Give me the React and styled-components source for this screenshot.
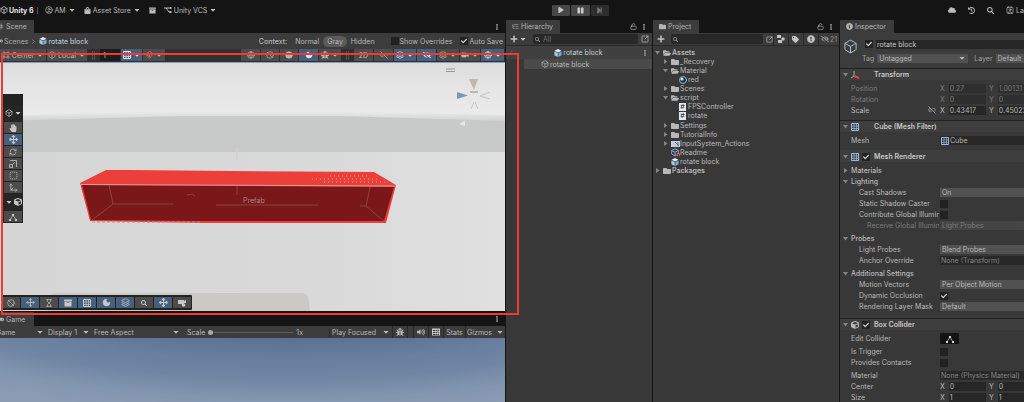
import React from 'react'
import styled, { createGlobalStyle, css } from 'styled-components'
import {
  FaArchive,
  FaArrowsAlt,
  FaBug,
  FaCaretDown,
  FaCheck,
  FaCloud,
  FaCube,
  FaEllipsisV,
  FaExclamationCircle,
  FaEyeSlash,
  FaFolder,
  FaFolderOpen,
  FaGamepad,
  FaHandPaper,
  FaHashtag,
  FaHistory,
  FaInfoCircle,
  FaPause,
  FaPlay,
  FaPlus,
  FaSearch,
  FaShoppingBag,
  FaStepForward,
  FaTag,
  FaVolumeUp,
} from 'react-icons/fa'
import {
  Ban,
  Box,
  ChevronRight,
  ChevronLeft,
  Circle,
  CircleUser,
  Contact,
  Frame,
  Globe,
  Hash,
  Hourglass,
  Layers,
  Link2Off,
  ListTree,
  Magnet,
  Moon,
  Move,
  Move3d,
  RefreshCw,
  SquareArrowOutUpRight,
  SquareDashed,
  Unlock,
  Video,
} from 'lucide-react'

export default () => {
  return (
    <Editor>
      <GlobalStyle />
      <TopBar />
      <Workspace>
        <SceneColumn />
        <HierarchyPanel />
        <ProjectPanel />
        <InspectorPanel />
      </Workspace>
    </Editor>
  )
}

/* ---------- top bar ---------- */

const TopBar = () => (
  <Header>
    <HeaderSide>
      <HeaderItem $bold>
        <Box size={8} />
        Unity 6
      </HeaderItem>
      <HeaderRule />
      <HeaderItem>
        <CircleUser size={8} />
        AM
        <Caret />
      </HeaderItem>
      <HeaderItem>
        <FaShoppingBag size={7} />
        Asset Store
        <Caret />
      </HeaderItem>
      <HeaderItem aria-label="Package Manager">
        <FaArchive size={7} />
      </HeaderItem>
      <HeaderItem>
        <VcsIcon />
        Unity VCS
        <Caret />
      </HeaderItem>
    </HeaderSide>
    <PlayControls>
      <PlayButton aria-label="Play">
        <FaPlay size={6} />
      </PlayButton>
      <PlayButton aria-label="Pause">
        <FaPause size={7} />
      </PlayButton>
      <PlayButton aria-label="Step" $dim>
        <FaStepForward size={7} />
      </PlayButton>
    </PlayControls>
    <HeaderSide $end>
      <HeaderItem aria-label="Cloud">
        <FaCloud size={8} />
      </HeaderItem>
      <HeaderItem aria-label="Undo history">
        <FaHistory size={7} />
      </HeaderItem>
      <HeaderItem aria-label="Search">
        <FaSearch size={7} />
      </HeaderItem>
      <HeaderItem>
        <Contact size={8} />
        La
      </HeaderItem>
    </HeaderSide>
  </Header>
)

const Caret = () => <FaCaretDown size={8} />

const VcsIcon = () => (
  <svg width="8" height="8" viewBox="0 0 8 8" fill="none" stroke="currentColor">
    <path d="M0 2h2l3 4h1M2 2h3" />
    <path d="M5.5 1h2v2h-2zM5.5 5h2v2h-2z" fill="currentColor" stroke="none" />
  </svg>
)

const ColliderIcon = ({ size = 8 }) => (
  <svg width={size} height={size} viewBox="0 0 8 8" fill="currentColor">
    <path d="M1 7L4 2l3 5" fill="none" stroke="currentColor" strokeWidth="0.7" />
    <path d="M3 1h2v2H3zM0 6h2v2H0zM6 6h2v2H6z" />
  </svg>
)

const GridIcon = ({ color = 'currentColor' }) => (
  <svg width="8" height="8" viewBox="0 0 8 8" fill="none" stroke={color}>
    <path d="M0.500 0.500h7v7h-7z" />
    <path d="M0 3h8M0 5.500h8M3 0v8M5.500 0v8" strokeWidth="0.700" />
  </svg>
)

const ScaleIcon = () => (
  <svg width="9" height="9" viewBox="0 0 9 9" fill="none" stroke="currentColor">
    <path d="M0.500 5.500h3v3h-3zM1 1.500h6.500V8M3.500 5.500L6 3" strokeWidth="0.800" />
  </svg>
)

const KeyboardIcon = () => (
  <svg width="8" height="8" viewBox="0 0 8 8">
    <path d="M0 0.500h8v7H0z" fill="#c4c4c4" />
    <path d="M1 2.500h6M1 4.500h6M1 6.500h6" stroke="#3c3c3c" strokeDasharray="2 0.500" />
  </svg>
)

const CameraIcon = () => (
  <svg width="8" height="8" viewBox="0 0 8 8" fill="currentColor">
    <path d="M0 1h6v4H0zM6 2l2-1v3L6 4z" />
    <circle cx="5.500" cy="6" r="1.800" />
  </svg>
)

/* ---------- scene + game ---------- */

const SceneColumn = () => (
  <Column>
    <TabRow>
      <Tab>
        <Hash size={7} />
        Scene
      </Tab>
      <Menu />
    </TabRow>
    <Breadcrumbs>
      <Crumb href="#scenes">
        <FaGamepad size={6} />
        Scenes
      </Crumb>
      <ChevronRight size={7} />
      <Crumb href="#rotate-block" $current>
        <PrefabIcon />
        rotate block
      </Crumb>
      <Context>
        <ContextLabel>Context:</ContextLabel>
        <ContextButton>Normal</ContextButton>
        <ContextButton $active>Gray</ContextButton>
        <ContextButton>Hidden</ContextButton>
      </Context>
      <ToggleLabel>
        <Check />
        Show Overrides
      </ToggleLabel>
      <ToggleLabel>
        <Check checked />
        Auto Save
      </ToggleLabel>
    </Breadcrumbs>
    <SceneTools>
      <ToolButton $w={46}>
        <Frame size={8} />
        Center
        <Caret />
      </ToolButton>
      <ToolButton $w={40}>
        <Box size={8} />
        Local
        <Caret />
      </ToolButton>
      <Grip />
      <SnapInput aria-label="Snap increment" defaultValue="1" />
      <ToolButton $w={21} $active aria-label="Grid snapping">
        <GridIcon />
        <Caret />
      </ToolButton>
      <ToolButton $w={22} aria-label="Increment snapping">
        <Magnet size={8} color="#e08078" />
        <Caret />
      </ToolButton>
      <Spacer />
      <ToolButton $w={19} aria-label="Wireframe">
        <Globe size={8} />
      </ToolButton>
      <ToolButton $w={18} aria-label="Shaded wireframe">
        <Ban size={8} />
      </ToolButton>
      <ToolButton $w={18} aria-label="Shaded">
        <Circle size={8} fill="currentColor" />
      </ToolButton>
      <ToolButton $w={19} $active aria-label="Lit">
        <Moon size={8} fill="currentColor" />
      </ToolButton>
      <ToolButton $w={22} aria-label="Debug draw">
        <FaBug size={8} />
        <Caret />
      </ToolButton>
      <Grip />
      <ToolButton $w={19} aria-label="2D view">
        2D
      </ToolButton>
      <ToolButton $w={19} aria-label="Lighting">
        <Link2Off size={8} />
      </ToolButton>
      <ToolButton $w={22} $active aria-label="Effects">
        <Layers size={8} />
        <Caret />
      </ToolButton>
      <ToolButton $w={19} $active aria-label="Visibility">
        <FaEyeSlash size={8} />
      </ToolButton>
      <ToolButton $w={22} aria-label="Scene layers">
        <Layers size={8} />
        <Caret />
      </ToolButton>
      <ToolButton $w={20} aria-label="Camera">
        <Video size={8} fill="currentColor" />
        <Caret />
      </ToolButton>
      <ToolButton $w={23} $active aria-label="Gizmos">
        <Globe size={8} />
        <Caret />
      </ToolButton>
    </SceneTools>
    <SceneView>
      <SceneDrawing />
      <ToolPalette>
        <PaletteGrip />
        <PaletteButton $dark aria-label="Tool settings">
          <Box size={8} />
          <Caret />
        </PaletteButton>
        <PaletteButton aria-label="Hand">
          <FaHandPaper size={8} />
        </PaletteButton>
        <PaletteButton $active aria-label="Move">
          <FaArrowsAlt size={9} />
        </PaletteButton>
        <PaletteButton aria-label="Rotate">
          <RefreshCw size={8} />
        </PaletteButton>
        <PaletteButton aria-label="Scale">
          <ScaleIcon />
        </PaletteButton>
        <PaletteButton aria-label="Rect">
          <SquareDashed size={9} />
        </PaletteButton>
        <PaletteButton aria-label="Transform">
          <Move3d size={9} />
        </PaletteButton>
        <PaletteButton $dark aria-label="Component tools">
          <Caret />
          <FaCube size={8} />
        </PaletteButton>
        <PaletteButton aria-label="Edit bounds">
          <ColliderIcon />
        </PaletteButton>
      </ToolPalette>
      <OverlayBar>
        <OverlayButton aria-label="Orientation">
          <Ban size={8} />
        </OverlayButton>
        <OverlayButton $active aria-label="Tools">
          <Move size={9} />
        </OverlayButton>
        <OverlayButton aria-label="Timing">
          <Hourglass size={8} />
        </OverlayButton>
        <OverlayButton $active aria-label="Tool settings">
          <FaArchive size={8} />
        </OverlayButton>
        <OverlayButton $active aria-label="Grid and snap">
          <GridIcon />
        </OverlayButton>
        <OverlayButton $active aria-label="Draw modes">
          <Moon size={9} fill="currentColor" />
        </OverlayButton>
        <OverlayButton $active aria-label="View options">
          <Layers size={9} />
        </OverlayButton>
        <OverlayButton aria-label="Search">
          <FaSearch size={6} />
        </OverlayButton>
        <OverlayButton $active aria-label="Pivot">
          <FaArrowsAlt size={9} />
        </OverlayButton>
        <OverlayButton aria-label="Cameras">
          <CameraIcon />
        </OverlayButton>
      </OverlayBar>
    </SceneView>
    <TabRow $split>
      <Tab>
        <FaGamepad size={7} />
        Game
      </Tab>
      <Menu />
    </TabRow>
    <GameTools>
      <Dropdown $w={52} $flat value="Game" label="View" />
      <Dropdown $w={46} $flat value="Display 1" label="Display" />
      <Dropdown $w={90} $flat value="Free Aspect" label="Aspect" />
      <ScaleLabel>
        Scale
        <ScaleSlider type="range" min="1" max="5" defaultValue="1" />
        <output>1x</output>
      </ScaleLabel>
      <Dropdown $w={63} $flat $ruled value="Play Focused" label="Play mode" />
      <GameButton $w={15} aria-label="Frame debugger">
        <FaBug size={8} />
      </GameButton>
      <GameButton $w={6} aria-label="More" />
      <GameButton $w={15} aria-label="Mute audio">
        <FaVolumeUp size={8} />
      </GameButton>
      <GameButton $w={15} aria-label="Shortcuts">
        <KeyboardIcon />
      </GameButton>
      <GameButton $w={22}>Stats</GameButton>
      <GameButton $w={40}>
        Gizmos
        <Caret />
      </GameButton>
    </GameTools>
    <GameView />
    <Annotation />
  </Column>
)

const SceneDrawing = () => (
  <Drawing viewBox="0 0 505 249" preserveAspectRatio="none">
    <defs>
      <linearGradient id="sky" x1="0" y1="0" x2="0" y2="1">
        <stop offset="0" stopColor="#dcdcdc" />
        <stop offset="0.5" stopColor="#e6e6e6" />
        <stop offset="1" stopColor="#ebebeb" />
      </linearGradient>
      <linearGradient id="floor" x1="0" y1="0" x2="1" y2="0">
        <stop offset="0" stopColor="#d6d6d6" />
        <stop offset="0.6" stopColor="#d9d9d9" />
        <stop offset="1" stopColor="#e0e0e0" />
      </linearGradient>
      <linearGradient id="horizon" x1="0" y1="0" x2="0" y2="1">
        <stop offset="0" stopColor="#e9e9e9" />
        <stop offset="1" stopColor="#c8caca" />
      </linearGradient>
    </defs>
    <rect width="505" height="55" fill="url(#sky)" />
    <path d="M0 54L140 50H340L505 53V62H0z" fill="url(#horizon)" />
    <path d="M0 59L180 54H340L505 59V91H0z" fill="#c8caca" />
    <rect y="90" width="505" height="159" fill="url(#floor)" />
    <path d="M48 234l6-3h250l4 3 2 15H48z" fill="#cbc9c5" />
    <path d="M0 0.500H505" stroke="#8c9cc4" />

    {/* orientation gizmo */}
    <path d="M446 7h9M446 9.500h9" stroke="#9b9794" />
    <path d="M469 17h9l-4 11z" fill="#beb8ae" />
    <path d="M470 30h8" stroke="#b9b9b9" strokeWidth="2" />
    <path d="M457 30v7l11-3.500z" fill="#7f95b4" />
    <path d="M480 34l10-4M480 34l10 3M474 40l-3 7M475 40l3 7" stroke="#c6c6c6" />
    <path d="M459 62l6-3v5z" fill="#e6e6e6" />

    {/* prefab block */}
    <path d="M237 85v13M235 89l2-3 2 3" stroke="#d2cecc" fill="none" />
    <path d="M80 121l26-13h22l105 1 141 1 22 13-10 38H200L90 159z" fill="#ec3f39" />
    <path d="M82 123l312 2-10 34H200l-109-1z" fill="#7a1719" />
    <path d="M81 122.500l314 1.500" stroke="#d2a29b" />
    <path d="M330 114h40M312 117h66M324 120h62" stroke="#e5a89f" strokeDasharray="1 3" />
    <path d="M92 160h110" stroke="#b98c86" strokeDasharray="3 2" />
    <g stroke="#8c443f" fill="none">
      <path d="M109 123l4 19h60M113 142l-21 16M216 143h102" />
      <path d="M370 125l-4 19h-6M366 144l18 15" />
      <path d="M237 124v9M187 133l5-1 3 2" />
    </g>
    <PrefabText x="243" y="141">
      Prefab
    </PrefabText>
  </Drawing>
)

/* ---------- hierarchy ---------- */

const HierarchyPanel = () => (
  <Column>
    <TabRow>
      <Tab $w={54}>
        <ListTree size={7} />
        Hierarchy
      </Tab>
      <Menu lock />
    </TabRow>
    <PanelTools>
      <IconButton aria-label="Create">
        <FaPlus size={8} />
        <Caret />
      </IconButton>
      <SearchField placeholder="All" />
      <IconButton aria-label="Pick">
        <SquareArrowOutUpRight size={8} />
      </IconButton>
    </PanelTools>
    <PrefabHeader>
      <ChevronLeft size={7} color="#707070" />
      <PrefabName>
        <PrefabIcon />
        rotate block
      </PrefabName>
      <FaEllipsisV size={6} />
    </PrefabHeader>
    <HierarchyRow>
      <Box size={8} />
      rotate block
    </HierarchyRow>
  </Column>
)

/* ---------- project ---------- */

const assets = [
  { name: 'Assets', level: 0, icon: 'open', arrow: 'down', bold: true },
  { name: '_Recovery', level: 1, icon: 'folder', arrow: 'right' },
  { name: 'Material', level: 1, icon: 'open', arrow: 'down' },
  { name: 'red', level: 2, icon: 'material' },
  { name: 'Scenes', level: 1, icon: 'folder', arrow: 'right' },
  { name: 'script', level: 1, icon: 'open', arrow: 'down' },
  { name: 'FPSController', level: 2, icon: 'script' },
  { name: 'rotate', level: 2, icon: 'script' },
  { name: 'Settings', level: 1, icon: 'folder', arrow: 'right', spaced: true },
  { name: 'TutorialInfo', level: 1, icon: 'folder', arrow: 'right' },
  { name: 'InputSystem_Actions', level: 1, icon: 'input', arrow: 'right' },
  { name: 'Readme', level: 1, icon: 'readme' },
  { name: 'rotate block', level: 1, icon: 'prefab' },
  { name: 'Packages', level: 0, icon: 'folder', arrow: 'right', bold: true },
]

const AssetIcon = ({ kind }) => {
  switch (kind) {
    case 'open':
      return <FaFolderOpen size={8} />
    case 'material':
      return (
        <svg width="8" height="8" viewBox="0 0 8 8">
          <circle cx="4" cy="4" r="3.500" fill="#27384a" stroke="#8fb0cc" />
          <circle cx="3" cy="3" r="1.500" fill="#dbe6ee" />
        </svg>
      )
    case 'script':
      return (
        <ScriptTile>
          <FaHashtag size={5} />
        </ScriptTile>
      )
    case 'input':
      return (
        <svg width="9" height="8" viewBox="0 0 9 8">
          <path d="M0 1h9v6H0z" fill="#c8ccd2" />
          <path d="M4 2l4 4M7 2v4" stroke="#4b6f9c" />
        </svg>
      )
    case 'readme':
      return (
        <svg width="9" height="9" viewBox="0 0 9 9" fill="none">
          <path d="M4 0.700L7.300 2.500v3.500L4 8 0.700 6V2.500zM0.700 2.500L4 4.300l3.300-1.800M4 4.300V8" stroke="#7faad4" />
          <path d="M6.500 5v3.500M8.500 5v3.500" stroke="#e2453c" />
        </svg>
      )
    case 'prefab':
      return <PrefabIcon />
    default:
      return <FaFolder size={8} />
  }
}

const PrefabIcon = () => (
  <svg width="8" height="8" viewBox="0 0 8 8">
    <path d="M4 0L7.500 1.800 4 3.600 0.500 1.800z" fill="#e2edf5" />
    <path d="M0.400 2.400L3.700 4.100V8L0.400 6.200z" fill="#a9cbe4" />
    <path d="M7.600 2.400L4.300 4.100V8l3.300-1.800z" fill="#7ba7cb" />
  </svg>
)

const ProjectPanel = () => (
  <Column>
    <TabRow>
      <Tab $w={46}>
        <FaFolder size={7} />
        Project
      </Tab>
      <Menu lock />
    </TabRow>
    <PanelTools $flush>
      <IconButton aria-label="Create asset">
        <FaPlus size={8} />
      </IconButton>
      <SearchField />
      <IconButton aria-label="Pick">
        <SquareArrowOutUpRight size={7} />
      </IconButton>
      <IconButton $ruled aria-label="Filter by type">
        <ShapesIcon />
      </IconButton>
      <IconButton $ruled aria-label="Filter by label">
        <FaTag size={7} />
      </IconButton>
      <IconButton $ruled aria-label="Filter by log">
        <FaExclamationCircle size={8} />
      </IconButton>
      <IconButton $ruled $dim aria-label="Hidden packages">
        <FaEyeSlash size={8} />
        21
      </IconButton>
    </PanelTools>
    <Tree>
      {assets.map(asset => (
        <TreeRow
          key={asset.name + asset.level}
          $level={asset.level}
          $bold={asset.bold}
          $spaced={asset.spaced}
        >
          <Arrow $open={asset.arrow === 'down'} $hidden={!asset.arrow} />
          <IconSlot>
            <AssetIcon kind={asset.icon} />
          </IconSlot>
          {asset.name}
        </TreeRow>
      ))}
    </Tree>
  </Column>
)

const ShapesIcon = () => (
  <svg width="8" height="8" viewBox="0 0 8 8" fill="currentColor">
    <path d="M0 0h4v3H0zM1 5h4v3H1z" />
    <circle cx="6" cy="4" r="1.800" />
  </svg>
)

/* ---------- inspector ---------- */

const InspectorPanel = () => (
  <Column>
    <TabRow>
      <Tab $w={54}>
        <FaInfoCircle size={7} />
        Inspector
      </Tab>
    </TabRow>
    <ObjectHeader>
      <Box size={15} strokeWidth={1.5} color="#b4c6d6" />
      <ObjectFields>
        <ObjectRow>
          <Check checked label="Active" />
          <NameInput aria-label="Name" defaultValue="rotate block" />
        </ObjectRow>
        <ObjectRow>
          <SmallLabel htmlFor="tag">Tag</SmallLabel>
          <Dropdown id="tag" $w={91} value="Untagged" />
          <SmallLabel htmlFor="layer">Layer</SmallLabel>
          <Dropdown id="layer" $grow value="Default" />
        </ObjectRow>
      </ObjectFields>
    </ObjectHeader>

    <ComponentHeader>
      <Arrow $open />
      <svg width="8" height="8" viewBox="0 0 8 8" fill="none">
        <path d="M3 0v5" stroke="#8fb0d0" />
        <path d="M3 5L0 7" stroke="#9cc05c" />
        <path d="M3 5l5 2" stroke="#e2453c" strokeWidth="2" />
      </svg>
      <ComponentTitle>Transform</ComponentTitle>
    </ComponentHeader>
    <ComponentBody>
      <VectorField label="Position" x="0.27" y="1.00131" dim />
      <VectorField label="Rotation" x="0" y="0" dim />
      <VectorField label="Scale" x="0.43417" y="0.45023" linked />
    </ComponentBody>

    <ComponentHeader>
      <Arrow $open />
      <GridIcon color="#9dbbe0" />
      <ComponentTitle>Cube (Mesh Filter)</ComponentTitle>
    </ComponentHeader>
    <ComponentBody>
      <ObjectField label="Mesh" value="Cube" mesh />
    </ComponentBody>

    <ComponentHeader $plain>
      <Arrow $open />
      <GridIcon color="#9dbbe0" />
      <Check checked label="Mesh Renderer enabled" />
      <ComponentTitle>Mesh Renderer</ComponentTitle>
    </ComponentHeader>
    <ComponentBody>
      <Group>
        <Foldout>
          <Arrow />
          Materials
        </Foldout>
        <Foldout>
          <Arrow $open />
          Lighting
        </Foldout>
        <SelectField level={1} label="Cast Shadows" value="On" />
        <CheckField level={1} label="Static Shadow Caster" />
        <CheckField level={1} label="Contribute Global Illumination" />
        <SelectField level={2} label="Receive Global Illumination" value="Light Probes" dim />
      </Group>
      <Group>
        <Foldout>
          <Arrow $open />
          Probes
        </Foldout>
        <SelectField level={1} label="Light Probes" value="Blend Probes" />
        <ObjectField level={1} label="Anchor Override" value="None (Transform)" empty />
      </Group>
      <Group>
        <Foldout>
          <Arrow $open />
          Additional Settings
        </Foldout>
        <SelectField level={1} label="Motion Vectors" value="Per Object Motion" />
        <CheckField level={1} label="Dynamic Occlusion" checked />
        <SelectField level={1} label="Rendering Layer Mask" value="Default" />
      </Group>
    </ComponentBody>

    <ComponentHeader>
      <Arrow $open />
      <FaCube size={8} />
      <Check checked label="Box Collider enabled" />
      <ComponentTitle>Box Collider</ComponentTitle>
    </ComponentHeader>
    <ComponentBody>
      <Group>
        <Field>
          <FieldLabel as="span">Edit Collider</FieldLabel>
          <EditButton aria-label="Edit Collider">
            <ColliderIcon />
          </EditButton>
        </Field>
      </Group>
      <Group>
        <CheckField label="Is Trigger" />
        <CheckField label="Provides Contacts" />
      </Group>
      <ObjectField label="Material" value="None (Physics Material)" empty />
      <VectorField label="Center" x="0" y="0" />
      <VectorField label="Size" x="1" y="1" />
    </ComponentBody>
  </Column>
)

const toId = label => label.toLowerCase().replace(/ /g, '-')

const SelectField = ({ label, value, level, dim }) => (
  <Field $dim={dim}>
    <FieldLabel $level={level} htmlFor={toId(label)}>
      {label}
    </FieldLabel>
    <Dropdown id={toId(label)} value={value} $grow />
  </Field>
)

const CheckField = ({ label, level, checked }) => (
  <Field>
    <FieldLabel $level={level} htmlFor={toId(label)}>
      {label}
    </FieldLabel>
    <Check id={toId(label)} checked={checked} />
  </Field>
)

const ObjectField = ({ label, value, level, mesh, empty }) => (
  <Field>
    <FieldLabel $level={level} htmlFor={toId(label)}>
      {label}
    </FieldLabel>
    <ObjectBox>
      {mesh && <GridIcon color="#9dbbe0" />}
      <BareInput id={toId(label)} readOnly defaultValue={value} $empty={empty} />
    </ObjectBox>
  </Field>
)

const VectorField = ({ label, x, y, dim, linked }) => (
  <Field as="fieldset" $dim={dim}>
    <FieldLabel as="span">
      {label}
      {linked && <Link2Off size={8} />}
    </FieldLabel>
    <Axis>
      X
      <AxisInput defaultValue={x} />
    </Axis>
    <Axis>
      Y
      <AxisInput defaultValue={y} />
    </Axis>
  </Field>
)

/* ---------- shared controls ---------- */

const Menu = ({ lock }) => (
  <MenuButtons>
    {lock && (
      <IconButton aria-label="Lock">
        <Unlock size={7} />
      </IconButton>
    )}
    <IconButton aria-label="Menu">
      <FaEllipsisV size={6} />
    </IconButton>
  </MenuButtons>
)

const Check = ({ id, checked, label }) => (
  <CheckWrap>
    <input type="checkbox" id={id} defaultChecked={checked} aria-label={label} />
    <FaCheck size={6} />
  </CheckWrap>
)

const Dropdown = ({ id, value, label, ...rest }) => (
  <DropdownWrap {...rest}>
    <select id={id} aria-label={label} defaultValue={value}>
      <option>{value}</option>
    </select>
    <FaCaretDown size={8} />
  </DropdownWrap>
)

const SearchField = ({ placeholder }) => (
  <SearchBox>
    <FaSearch size={5} />
    <BareInput type="search" aria-label="Search" placeholder={placeholder} />
  </SearchBox>
)

/* ---------- styles ---------- */

const GlobalStyle = createGlobalStyle`
  * {
    box-sizing: border-box;
  }

  body {
    margin: 0;
    background: #141414;
    color: #b8b8b8;
    font: 7px/9px Inter, 'Liberation Sans', sans-serif;
  }

  button, input, select {
    margin: 0;
    padding: 0;
    border: none;
    border-radius: 0;
    background: none;
    color: inherit;
    font: inherit;
  }

  svg {
    flex: none;
  }
`

const Editor = styled.div`
  display: flex;
  flex-direction: column;
  height: 100vh;
  overflow: hidden;
  white-space: nowrap;
`

const Header = styled.header`
  display: grid;
  grid-template-columns: 552fr 57px 415fr;
  align-items: center;
  flex: none;
  height: 20px;
`

const HeaderSide = styled.div`
  display: flex;
  align-items: center;
  gap: ${p => (p.$end ? 12 : 8)}px;
  justify-content: ${p => (p.$end ? 'flex-end' : 'flex-start')};
  overflow: hidden;
`

const HeaderItem = styled.button`
  display: flex;
  align-items: center;
  gap: ${p => (p.$bold ? 1 : 2)}px;
  color: ${p => (p.$bold ? '#e6e6e6' : '#bcbcbc')};
  font-weight: ${p => (p.$bold ? 700 : 400)};
`

const HeaderRule = styled.span`
  width: 1px;
  height: 7px;
  margin: 0 -1px 0 -5px;
  background: #555;
`

const PlayControls = styled.div`
  display: flex;
  gap: 1px;
`

const PlayButton = styled.button`
  display: flex;
  flex: 1;
  align-items: center;
  justify-content: center;
  height: 11px;
  border-radius: 1px;
  background: ${p => (p.$dim ? '#2e2e2e' : '#474747')};
  color: ${p => (p.$dim ? '#7c7c7c' : '#c8c8c8')};
`

const Workspace = styled.main`
  display: grid;
  grid-template-columns: 505fr 146fr 186fr 184fr;
  grid-template-rows: minmax(0, 1fr);
  gap: 1px;
  flex: 1;
  min-height: 0;
`

const Column = styled.section`
  display: flex;
  flex-direction: column;
  position: relative;
  min-width: 0;
  background: linear-gradient(#141414 13px, #383838 13px);
`

const TabRow = styled.div`
  display: flex;
  justify-content: space-between;
  flex: none;
  height: ${p => (p.$split ? 15 : 13)}px;
  padding-top: ${p => (p.$split ? 1 : 0)}px;
  background: #141414;
`

const Tab = styled.div`
  display: flex;
  align-items: center;
  gap: 2px;
  width: ${p => p.$w || 34}px;
  padding-left: ${p => (p.$w ? 6 : 0)}px;
  border-radius: 1px 1px 0 0;
  background: #3c3c3c;
  color: #b4b4b4;

  svg {
    margin-left: ${p => (p.$w ? 0 : -3)}px;
  }
`

const MenuButtons = styled.div`
  display: flex;
  align-items: center;
  gap: 4px;
  padding-right: 5px;
`

const IconButton = styled.button`
  display: flex;
  align-items: center;
  justify-content: center;
  gap: 1px;
  height: 100%;
  color: ${p => (p.$dim ? '#909090' : '#c4c4c4')};
  ${p =>
    p.$ruled &&
    css`
      min-width: 15px;
      margin-left: -3px;
      padding: 0 2px;
      border-left: 1px solid #2a2a2a;
    `}
`

const Breadcrumbs = styled.nav`
  display: flex;
  align-items: center;
  gap: 2px;
  flex: none;
  height: 16px;
  padding-right: 2px;
  overflow: hidden;
  background: #3c3c3c;

  > a:first-child {
    margin-left: -3px;
  }
`

const Crumb = styled.a`
  display: flex;
  align-items: center;
  gap: 1px;
  color: ${p => (p.$current ? '#b6c2cc' : '#a8a8a8')};
  text-decoration: none;
  font-weight: ${p => (p.$current ? 500 : 400)};
`

const Context = styled.div`
  display: flex;
  align-items: center;
  margin-right: 4px;
  margin-left: auto;
`

const ContextLabel = styled.span`
  margin-right: 4px;
  font-weight: 500;
`

const ContextButton = styled.button`
  height: 11px;
  padding: 0 4px;
  border-radius: 6px;
  background: ${p => (p.$active ? '#5a5a5a' : 'none')};
`

const ToggleLabel = styled.label`
  display: flex;
  align-items: center;
  gap: 1px;
  margin-left: 6px;
`

const SceneTools = styled.div`
  display: flex;
  gap: 1px;
  flex: none;
  height: 13px;
  padding-right: 1px;
  background: #303030;
`

const ToolButton = styled.button`
  display: flex;
  align-items: center;
  justify-content: center;
  gap: 2px;
  flex: 0 1 ${p => p.$w}px;
  min-width: 0;
  height: 12px;
  background: ${p => (p.$active ? '#46607c' : '#4c4c4c')};
  color: ${p => (p.$active ? '#dde6ee' : '#b8b8b8')};
`

const Grip = styled.span`
  width: 3px;
  height: 9px;
  margin: 2px 4px 0;
  border: solid #505050;
  border-width: 0 1px;
`

const Spacer = styled.span`
  flex: 1;
`

const SnapInput = styled.input`
  width: 20px;
  height: 12px;
  padding-left: 3px;
  background: #1c1c1c;
`

const SceneView = styled.div`
  position: relative;
  flex: 249 0 0;
  min-height: 0;
`

const Drawing = styled.svg`
  display: block;
  width: 100%;
  height: 100%;
`

const PrefabText = styled.text`
  fill: #b08480;
  font-size: 7px;
`

const ToolPalette = styled.div`
  display: flex;
  flex-direction: column;
  gap: 1px;
  position: absolute;
  top: 32px;
  left: 3px;
  width: 20px;
  padding: 0 1px 1px;
  background: #232323;
`

const PaletteGrip = styled.span`
  height: 10px;
`

const PaletteButton = styled.button`
  display: flex;
  align-items: center;
  justify-content: center;
  gap: 1px;
  height: ${p => (p.$dark ? 16 : 11)}px;
  background: ${p => (p.$active ? '#46607c' : p.$dark ? '#262626' : '#4c4c4c')};
  color: #c8c8c8;
`

const OverlayBar = styled.div`
  display: flex;
  gap: 1px;
  position: absolute;
  bottom: 1px;
  left: 1px;
  padding: 2px 1px;
  border-radius: 1px;
  background: #232323;
`

const OverlayButton = styled(PaletteButton)`
  width: 18px;
`

const GameTools = styled.div`
  display: flex;
  align-items: center;
  flex: none;
  height: 12px;
  overflow: hidden;
  background: #3c3c3c;

  > span:first-child {
    margin-left: -6px;
  }
`

const ScaleLabel = styled.label`
  display: flex;
  align-items: center;
  gap: 3px;
  flex: 1;
  min-width: 0;
  padding-right: 26px;
  padding-left: 5px;
`

const ScaleSlider = styled.input`
  flex: 1;
  min-width: 0;
  height: 6px;
  appearance: none;
  background: linear-gradient(#5e5e5e, #5e5e5e) center / 100% 1px no-repeat;

  &::-webkit-slider-thumb {
    width: 5px;
    height: 5px;
    border-radius: 50%;
    appearance: none;
    background: #a8a8a8;
  }
`

const GameButton = styled.button`
  display: flex;
  align-items: center;
  justify-content: center;
  gap: 4px;
  flex: none;
  width: ${p => p.$w}px;
  height: 12px;
  border-left: 1px solid #2a2a2a;
`

const GameView = styled.div`
  flex: 64 0 0;
  background: radial-gradient(
    ellipse 113% 323% at 57% -234%,
    #586e8f 70%,
    #6a80a0 84%,
    #6f85a3 92%,
    #8296af 102%,
    #8c9db3 112%
  );
`

const Annotation = styled.div`
  position: absolute;
  top: 33px;
  right: -14px;
  bottom: 87px;
  left: 1px;
  z-index: 1;
  border: 2px solid #ea3b35;
  pointer-events: none;
`

const PanelTools = styled.div`
  display: flex;
  align-items: center;
  gap: 3px;
  flex: none;
  height: 13px;
  padding: 0 ${p => (p.$flush ? 0 : 3)}px 0 4px;
  border-bottom: 1px solid #2a2a2a;
  background: #3c3c3c;
`

const SearchBox = styled.label`
  display: flex;
  align-items: center;
  gap: 3px;
  flex: 1;
  min-width: 0;
  height: 10px;
  margin-left: 3px;
  padding: 0 2px;
  border-radius: 2px;
  background: #282828;
  color: #989898;
`

const BareInput = styled.input`
  flex: 1;
  min-width: 0;
  height: 9px;
  color: ${p => (p.$empty ? '#868686' : 'inherit')};

  &::placeholder {
    color: #707070;
  }
`

const PrefabHeader = styled.div`
  display: flex;
  align-items: center;
  justify-content: space-between;
  flex: none;
  height: 13px;
  padding: 0 4px 0 2px;
  background: #404040;
`

const PrefabName = styled.span`
  display: flex;
  align-items: center;
  gap: 1px;
  color: #c4ccd2;
`

const HierarchyRow = styled.div`
  display: flex;
  align-items: center;
  gap: 1px;
  height: 10px;
  margin-left: 18px;
  padding-left: 17px;
  background: #4a4a4a;
`

const Tree = styled.ul`
  margin: 0;
  padding: 2px 0 0;
  list-style: none;
`

const TreeRow = styled.li`
  display: flex;
  align-items: center;
  height: 9px;
  margin-top: ${p => (p.$spaced ? 1 : 0)}px;
  padding-left: ${p => 2 + p.$level * 8}px;
  font-weight: ${p => (p.$bold ? 600 : 400)};
`

const IconSlot = styled.span`
  display: flex;
  width: 9px;
  margin-left: 3px;
`

const ScriptTile = styled.span`
  display: flex;
  align-items: center;
  justify-content: center;
  width: 7px;
  height: 8px;
  background: #e4e8ea;
  color: #26343e;
`

const Arrow = styled.span`
  flex: none;
  width: 5px;
  height: 5px;
  background: #868686;
  clip-path: ${p =>
    p.$open ? 'polygon(0 20%, 100% 20%, 50% 90%)' : 'polygon(20% 0, 90% 50%, 20% 100%)'};
  visibility: ${p => (p.$hidden ? 'hidden' : 'visible')};
`

const ObjectHeader = styled.div`
  display: flex;
  gap: 4px;
  flex: none;
  height: 35px;
  padding: 6px 0 0 3px;
  background: #3c3c3c;
`

const ObjectFields = styled.div`
  display: flex;
  flex-direction: column;
  gap: 4px;
  flex: 1;
  min-width: 0;
`

const ObjectRow = styled.div`
  display: flex;
  align-items: center;
  gap: 3px;
  height: 10px;
  padding-left: 3px;
  overflow: hidden;
`

const NameInput = styled.input`
  flex: 1;
  min-width: 0;
  height: 9px;
  padding-left: 1px;
  background: #262626;
  color: #c8c8c8;
`

const SmallLabel = styled.label`
  color: #a0a0a0;

  &:not(:first-child) {
    margin-left: 3px;
  }

  &:first-child {
    margin-left: -3px;
  }
`

const ComponentHeader = styled.div`
  display: flex;
  align-items: center;
  gap: 3px;
  flex: none;
  height: 12px;
  padding-left: 3px;
  border-top: 1px solid ${p => (p.$plain ? '#3e3e3e' : '#222')};
  background: #3e3e3e;
`

const ComponentTitle = styled.h2`
  flex: none;
  width: 150px;
  margin: 0 0 0 auto;
  color: #c8c8c8;
  font-size: 7px;
  font-weight: 600;
  line-height: 9px;
`

const ComponentBody = styled.div`
  flex: none;
  padding: 3px 0 4px;
`

const Group = styled.div`
  margin-bottom: 2px;
`

const Foldout = styled.div`
  display: flex;
  align-items: center;
  gap: 3px;
  height: 11px;
  padding-left: 3px;
  font-weight: 500;
`

const Field = styled.div`
  display: flex;
  align-items: center;
  gap: 1px;
  height: 11px;
  margin: 0;
  padding: 0;
  border: none;
  opacity: ${p => (p.$dim ? 0.5 : 1)};
`

const FieldLabel = styled.label`
  display: flex;
  justify-content: space-between;
  flex: none;
  width: 99px;
  padding-right: 3px;
  padding-left: ${p => 11 + (p.$level || 0) * 8}px;
  overflow: hidden;
`

const Axis = styled.label`
  display: flex;
  align-items: center;
  gap: 4px;
  flex: none;
  width: 48px;
  padding-right: 2px;
`

const AxisInput = styled.input`
  flex: 1;
  min-width: 0;
  height: 9px;
  padding-left: 1px;
  background: #262626;
`

const ObjectBox = styled.span`
  display: flex;
  align-items: center;
  gap: 1px;
  flex: 1;
  min-width: 0;
  height: 9px;
  padding-left: 1px;
  background: #282828;
`

const EditButton = styled.button`
  display: flex;
  align-items: center;
  justify-content: center;
  width: 19px;
  height: 11px;
  border-radius: 1px;
  background: #141414;
  color: #d6d6d6;
`

const CheckWrap = styled.span`
  display: grid;
  flex: none;
  place-items: center;
  width: 8px;
  height: 8px;

  input {
    grid-area: 1 / 1;
    width: 8px;
    height: 8px;
    appearance: none;
    background: #222;
  }

  svg {
    grid-area: 1 / 1;
    color: #d2d2d2;
    pointer-events: none;
  }

  input:not(:checked) + svg {
    visibility: hidden;
  }
`

const DropdownWrap = styled.span`
  display: grid;
  align-items: center;
  flex: ${p => (p.$w ? 'none' : '1')};
  width: ${p => (p.$w ? `${p.$w}px` : 'auto')};
  min-width: 0;
  background: ${p => (p.$flat ? 'none' : '#515151')};
  border-left: ${p => (p.$ruled ? '1px solid #2a2a2a' : 'none')};

  select {
    grid-area: 1 / 1;
    min-width: 0;
    height: 9px;
    padding-left: 2px;
    appearance: none;
  }

  svg {
    grid-area: 1 / 1;
    justify-self: end;
    margin-right: ${p => (p.$grow ? -9 : 2)}px;
    pointer-events: none;
  }
`
